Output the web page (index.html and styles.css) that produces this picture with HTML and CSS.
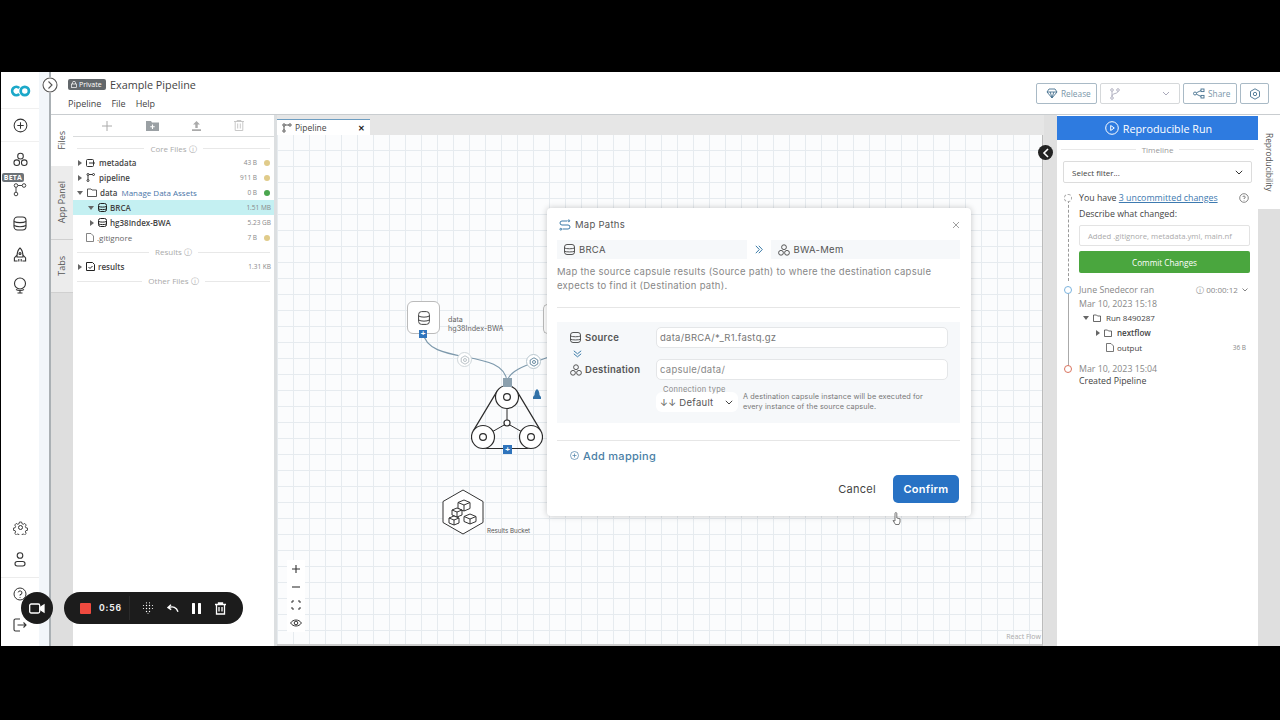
FILE: index.html
```html
<!DOCTYPE html>
<html lang="en">
<head>
<meta charset="utf-8">
<title>Example Pipeline</title>
<link rel="stylesheet" href="styles.css">
</head>
<body>
<div class="band"></div>
<div class="app">
  <nav class="rail">
    <div class="rail-logo">
      <svg width="21" height="12" viewBox="0 0 24 14" fill="none" stroke="#1ba8c9" stroke-width="3.200"><path d="M10.500 3.600A4.800 4.800 0 1 0 10.500 10.400"/><circle cx="17" cy="7" r="4.800"/></svg>
    </div>
    <div class="rail-item first">
      <svg width="15" height="15" viewBox="0 0 16 16" fill="none" stroke="#333" stroke-width="1.100"><circle cx="8" cy="8" r="6.800"/><path d="M8 4.600v6.800M4.600 8h6.800"/></svg>
    </div>
    <div class="rail-item sep">
      <svg width="15" height="15" viewBox="0 0 16 16" fill="none" stroke="#333" stroke-width="1.100"><circle cx="8" cy="4.400" r="3"/><circle cx="4" cy="11.400" r="3"/><circle cx="12" cy="11.400" r="3"/></svg>
    </div>
    <div class="rail-beta">
      <span class="beta">BETA</span>
      <svg width="14" height="14" viewBox="0 0 14 14" fill="none" stroke="#444" stroke-width="1"><circle cx="3" cy="2.500" r="1.800"/><circle cx="3" cy="11" r="1.800"/><circle cx="11" cy="2.500" r="1.800"/><path d="M3 4.300v4.900M5 2.500h4"/></svg>
    </div>
    <div class="rail-item db">
      <svg width="14" height="15" viewBox="0 0 14 15" fill="none" stroke="#333" stroke-width="1.100"><rect x="1" y="1" width="12" height="13" rx="3.500"/><path d="M1 5.400c3 1.600 9 1.600 12 0M1 9.600c3 1.600 9 1.600 12 0"/></svg>
    </div>
    <div class="rail-item rocket-item">
      <svg width="14" height="16" viewBox="0 0 14 16" fill="none" stroke="#333" stroke-width="1.100"><path d="M7 1C9.600 3 10 6 10 10H4C4 6 4.400 3 7 1ZM4 8l-2.600 3v3H4.600M10 8l2.600 3v3H9.400"/><circle cx="7" cy="6.500" r="1"/><path d="M5.800 12v2.500M8.200 12v2.500"/></svg>
    </div>
    <div class="rail-item compact">
      <svg width="14" height="17" viewBox="0 0 14 17" fill="none" stroke="#333" stroke-width="1.100"><circle cx="7" cy="6.500" r="5.500"/><path d="M3 12.500c2 1.300 6 1.300 8 0M7 13v3M4.500 16h5"/></svg>
    </div>
    <div class="rail-bottom">
      <div class="rail-item">
        <svg width="15" height="15" viewBox="0 0 24 24" fill="none" stroke="#333" stroke-width="1.600"><circle cx="12" cy="12" r="3.200"/><path d="M10 2h4l.6 3 2.400 1.100 2.600-1.600 2.800 2.900-1.600 2.500.9 2.600 3 .5v4l-3 .6-1 2.400 1.700 2.600-2.900 2.800-2.500-1.600-2.500 1-.6 3h-4l-.6-3-2.500-1-2.500 1.600-2.900-2.800 1.700-2.600-1-2.400-3-.6v-4l3-.5.900-2.600-1.600-2.500 2.800-2.900 2.600 1.600L9.400 5z" transform="translate(1.500 1.500) scale(.88)"/></svg>
      </div>
      <div class="rail-item user">
        <svg width="12" height="15" viewBox="0 0 12 15" fill="none" stroke="#333" stroke-width="1.100"><circle cx="6" cy="3.500" r="2.800"/><rect x="1" y="9.500" width="10" height="4.500" rx="2.200"/></svg>
      </div>
      <div class="rail-item help">
        <svg width="14" height="14" viewBox="0 0 14 14" fill="none" stroke="#333" stroke-width="1"><circle cx="7" cy="7" r="6"/><path d="M5.200 5.400A1.900 1.900 0 1 1 7 7.700V8.600M7 10v.8"/></svg>
      </div>
      <div class="rail-item">
        <svg width="14" height="14" viewBox="0 0 14 14" fill="none" stroke="#333" stroke-width="1.100"><path d="M7 1H2.500A1.500 1.500 0 0 0 1 2.500v9A1.500 1.500 0 0 0 2.500 13H7M4.500 7H13M10.500 4.500 13 7l-2.500 2.500"/></svg>
      </div>
    </div>
  </nav>
  <div class="gutter"></div>
  <div class="main">
    <header class="topbar">
      <div class="toggle">
        <svg width="16" height="16" viewBox="0 0 16 16" fill="none" stroke="#555" stroke-width="1.100"><circle cx="8" cy="8" r="7"/><path d="M6.500 4.500 10 8l-3.500 3.500"/></svg>
      </div>
      <div class="titles">
        <div class="title-row">
          <span class="private"><svg width="6" height="7" viewBox="0 0 6 7" fill="none" stroke="#fff" stroke-width=".7"><rect x=".5" y="3" width="5" height="3.500"/><path d="M1.500 3V1.800a1.500 1.500 0 0 1 3 0V3"/></svg>Private</span>
          <span class="pipeline-name">Example Pipeline</span>
        </div>
        <div class="menu"><span>Pipeline</span><span>File</span><span>Help</span></div>
      </div>
      <div class="actions">
        <button class="btn release">
          <svg width="12" height="11" viewBox="0 0 12 11" fill="none" stroke="#45708f" stroke-width=".9"><path d="M3 1h6l2 3-5 6-5-6zM1 4h10M4.200 4 6 10l1.800-6"/></svg>Release
        </button>
        <button class="btn branch">
          <svg width="10" height="12" viewBox="0 0 10 12" fill="none" stroke="#aab" stroke-width=".9"><circle cx="2" cy="2" r="1.300"/><circle cx="8" cy="2" r="1.300"/><circle cx="2" cy="10" r="1.300"/><path d="M2 3.300v5.400M8 3.300C8 6 2 5 2 8"/></svg>
          <svg class="chev" width="8" height="5" viewBox="0 0 8 5" fill="none" stroke="#aab" stroke-width="1"><path d="M1 1l3 3 3-3"/></svg>
        </button>
        <button class="btn share">
          <svg width="12" height="11" viewBox="0 0 12 11" fill="none" stroke="#45708f" stroke-width=".9"><circle cx="2" cy="5.500" r="1.500"/><rect x="8" y="1" width="3" height="2.600"/><rect x="8" y="7.400" width="3" height="2.600"/><path d="M3.400 4.800 8 2.500M3.400 6.200 8 8.500"/></svg>Share
        </button>
        <button class="btn gear">
          <svg width="12" height="12" viewBox="0 0 12 12" fill="none" stroke="#45708f" stroke-width=".9"><path d="M6 .8 10.500 3.400v5.200L6 11.200 1.500 8.600V3.400z"/><circle cx="6" cy="6" r="1.700"/></svg>
        </button>
      </div>
    </header>
    <div class="work">
      <div class="vtabs">
        <div class="vtab active"><span>Files</span></div>
        <div class="vtab panel"><span>App Panel</span></div>
        <div class="vtab tabs"><span>Tabs</span></div>
      </div>
      <aside class="files">
        <div class="file-tools">
          <svg width="12" height="12" viewBox="0 0 12 12" stroke="#aaa" fill="none" stroke-width="1"><path d="M6 1v10M1 6h10"/></svg>
          <svg width="13" height="11" viewBox="0 0 13 11"><path d="M0 1h5l1 1.500h7V11H0z" fill="#9aa0a4"/><path d="M6.500 4.500v4.500M4.300 6.700h4.400" stroke="#fff" stroke-width="1.100"/></svg>
          <svg width="9" height="10" viewBox="0 0 9 10" fill="#aaa"><path d="M4.500 0 8 3.500H5.700V7H3.300V3.500H1zM0 8.300h9V10H0z"/></svg>
          <svg width="10" height="11" viewBox="0 0 10 11" fill="none" stroke="#c2c2c2" stroke-width=".9"><path d="M0 1.500h10M3 1.500V.5h4v1M1.200 1.500V10.500h7.600V1.500M3.700 3.500v5M6.300 3.500v5"/></svg>
        </div>
        <div class="section-title core"><span>Core Files &#9432;</span></div>
        <div class="row"><i class="tri r"></i><svg class="ficon" width="10" height="8" viewBox="0 0 10 8" fill="none" stroke="#333"><rect x=".5" y=".5" width="7" height="7" rx="1"/><path d="M3 4h6"/></svg><b>metadata</b><em>43 B</em><u class="dot tan"></u></div>
        <div class="row"><i class="tri r"></i><svg class="ficon" width="10" height="9" viewBox="0 0 10 9" fill="none" stroke="#333"><circle cx="2" cy="1.500" r="1"/><circle cx="2" cy="7.500" r="1"/><circle cx="7.500" cy="1.500" r="1"/><path d="M2 2.500v4M3 1.500h3.500"/></svg><b>pipeline</b><em>911 B</em><u class="dot tan"></u></div>
        <div class="row"><i class="tri d"></i><svg class="ficon" width="10" height="9" viewBox="0 0 10 9" fill="none" stroke="#444" stroke-width=".9"><path d="M.5 1h3.500l1 1h4.500v6.500h-9z"/></svg><b>data</b><a>Manage Data Assets</a><em>0 B</em><u class="dot green"></u></div>
        <div class="row sel in1"><i class="tri d"></i><svg class="ficon" width="9" height="9" viewBox="0 0 9 9" fill="none" stroke="#222"><rect x=".5" y=".5" width="8" height="8" rx="2"/><path d="M.5 3.500c2 .8 6 .8 8 0M.5 6c2 .8 6 .8 8 0"/></svg><b>BRCA</b><em class="wide">1.51 MB</em></div>
        <div class="row in1 in1r"><i class="tri r"></i><svg class="ficon" width="9" height="9" viewBox="0 0 9 9" fill="none" stroke="#222"><rect x=".5" y=".5" width="8" height="8" rx="2"/><path d="M.5 3.500c2 .8 6 .8 8 0M.5 6c2 .8 6 .8 8 0"/></svg><b>hg38Index-BWA</b><em class="wide">5.23 GB</em></div>
        <div class="row"><i class="tri none"></i><svg class="ficon" width="8" height="9" viewBox="0 0 8 9" fill="none" stroke="#666" stroke-width=".8"><path d="M.5.500H5L7.500 3v5.500h-7z"/></svg><span class="plain">.gitignore</span><em>7 B</em><u class="dot tan"></u></div>
        <div class="section-title tight"><span>Results &#9432;</span></div>
        <div class="row"><i class="tri r"></i><svg class="ficon" width="9" height="9" viewBox="0 0 9 9" fill="none" stroke="#222"><path d="M.5.500h6l2 2v6h-8z"/><path d="M2.500 5l1.500 1.500L6.500 4"/></svg><b>results</b><em class="wide">1.31 KB</em></div>
        <div class="section-title tight"><span>Other Files &#9432;</span></div>
      </aside>
      <div class="split"></div>
      <section class="stage">
        <div class="stage-tabs">
          <div class="stage-tab">
            <svg width="10" height="10" viewBox="0 0 10 10" fill="none" stroke="#333" stroke-width=".8"><circle cx="2" cy="2" r="1.200"/><circle cx="2" cy="8" r="1.200"/><circle cx="8" cy="2" r="1.200"/><path d="M2 3.200v3.600M3.200 2h3.600"/></svg>
            <span>Pipeline</span><b>&#10005;</b>
          </div>
        </div>
        <div class="canvas">
          <div class="collapse">
            <svg width="8" height="10" viewBox="0 0 8 10" fill="none" stroke="#fff" stroke-width="1.600"><path d="M6 1 2 5l4 4"/></svg>
          </div>
          <svg class="wires" width="764" height="500" viewBox="0 0 764 500" fill="none" stroke="#7d99ac" stroke-width="1.200">
            <path d="M146 197C150 232 228 212 230 247"/>
            <path d="M230 247C232 235 250 230 272 222"/>
          </svg>
          <div class="node-data">
            <svg width="12" height="14" viewBox="0 0 12 14" fill="none" stroke="#444" stroke-width="1"><rect x=".6" y=".6" width="10.800" height="12.800" rx="3"/><path d="M.6 5c2.500 1.500 8.300 1.500 10.800 0M.6 9c2.500 1.500 8.300 1.500 10.800 0"/></svg>
            <span class="plus">+</span>
          </div>
          <div class="node-label"><span>data</span><span>hg38Index-BWA</span></div>
          <div class="node-stub"></div>
          <div class="mini m1"><svg width="10" height="10" viewBox="0 0 10 10" fill="none" stroke="#aab4ba" stroke-width=".8"><path d="M5 .8 8.800 3v4L5 9.200 1.200 7V3z"/><circle cx="5" cy="5" r="1.500"/></svg></div>
          <div class="mini m2"><svg width="10" height="10" viewBox="0 0 10 10" fill="none" stroke="#5b8098" stroke-width=".9"><path d="M5 .8 8.800 3v4L5 9.200 1.200 7V3z"/><circle cx="5" cy="5" r="1.500"/></svg></div>
          <span class="rocket"><svg width="8" height="10" viewBox="0 0 8 10" fill="#3272a8"><path d="M4 0c2 1.500 2.500 4 2.500 6L8 8v2H0V8l1.500-2C1.500 4 2 1.500 4 0z"/></svg></span>
          <div class="capsule">
            <svg width="72" height="72" viewBox="0 0 72 72" fill="#fff" stroke="#2b2b2b" stroke-width="1.200">
              <path d="M26.100 10.100 2.100 50.100M45.900 10.100 69.900 50.100M12 67.500h48"/>
              <path d="M36 21v20M34 43.500 12 56M38 43.500 60 56" stroke-width="1"/>
              <circle cx="36" cy="16" r="11.500"/><circle cx="36" cy="16" r="3.400"/>
              <circle cx="12" cy="56" r="11.500"/><circle cx="12" cy="56" r="3.400"/>
              <circle cx="60" cy="56" r="11.500"/><circle cx="60" cy="56" r="3.400"/>
              <circle cx="36" cy="42" r="3"/>
            </svg>
            <span class="handle-top"></span>
            <span class="plus">+</span>
          </div>
          <div class="bucket">
            <svg width="42" height="46" viewBox="0 0 42 46" fill="#fff" stroke="#333" stroke-width="1">
              <path d="M21 1 41 12.500V33.500L21 45 1 33.500V12.500z"/>
              <path d="M22 11l6 2.500v6l-6 2.500-6-2.500v-6zM16 13.500l6 2.500 6-2.500M22 16v6"/>
              <path d="M15 19l5 2v5l-5 2-5-2v-5zM10 21l5 2 5-2M15 23v5"/>
              <path d="M12 27l5 2v5l-5 2-5-2v-5zM7 29l5 2 5-2M12 31v5"/>
              <path d="M28 25l6 2.500v5l-6 2.500-6-2.500v-5zM22 27.500l6 2.500 6-2.500M28 30v5"/>
            </svg>
            <span>Results Bucket</span>
          </div>
          <div class="zoombar">
            <svg width="10" height="10" viewBox="0 0 10 10" stroke="#333" stroke-width="1.100"><path d="M5 1v8M1 5h8"/></svg>
            <svg width="10" height="10" viewBox="0 0 10 10" stroke="#333" stroke-width="1.100"><path d="M1 5h8"/></svg>
            <svg width="10" height="10" viewBox="0 0 10 10" fill="none" stroke="#333" stroke-width="1"><path d="M1 3V1h2M7 1h2v2M9 7v2H7M3 9H1V7"/></svg>
            <svg width="12" height="10" viewBox="0 0 12 10" fill="none" stroke="#333" stroke-width="1"><path d="M.6 5C3 1 9 1 11.400 5 9 9 3 9 .6 5z"/><circle cx="6" cy="5" r="1.800"/></svg>
          </div>
          <span class="flow-mark">React Flow</span>
          <div class="modal">
            <div class="modal-head">
              <svg width="12" height="12" viewBox="0 0 12 12" fill="none" stroke="#3b7ba8" stroke-width="1"><circle cx="9.800" cy="1.800" r=".9"/><circle cx="1.800" cy="10.200" r=".9"/><path d="M8 2H3a2 2 0 0 0 0 4h6a2 2 0 0 1 0 4H3.500"/></svg>
              <span>Map Paths</span>
              <svg class="close" width="8" height="8" viewBox="0 0 8 8" stroke="#888" stroke-width=".8"><path d="M1 1l6 6M7 1 1 7"/></svg>
            </div>
            <div class="modal-route">
              <div class="route-cell"><svg width="11" height="11" viewBox="0 0 11 11" fill="none" stroke="#444" stroke-width=".9"><rect x=".5" y=".5" width="10" height="10" rx="2.500"/><path d="M.5 4c2 1 8 1 10 0M.5 7.200c2 1 8 1 10 0"/></svg><span>BRCA</span></div>
              <svg class="route-arrow" width="8" height="9" viewBox="0 0 8 9" fill="none" stroke="#3b7ba8" stroke-width="1"><path d="M.8.800 4.300 4.500.8 8.200M3.800.800 7.300 4.500 3.800 8.200"/></svg>
              <div class="route-cell"><svg width="12" height="12" viewBox="0 0 12 12" fill="none" stroke="#444" stroke-width=".9"><circle cx="6" cy="3.200" r="2.400"/><circle cx="3" cy="8.800" r="2.400"/><circle cx="9" cy="8.800" r="2.400"/></svg><span>BWA-Mem</span></div>
            </div>
            <p class="modal-text">Map the source capsule results (Source path) to where the destination capsule expects to find it (Destination path).</p>
            <div class="mapping">
              <div class="map-row">
                <div class="map-label"><svg width="12" height="11" viewBox="0 0 12 11" fill="none" stroke="#444" stroke-width=".9"><rect x=".5" y=".5" width="10" height="10" rx="2.500"/><path d="M.5 4c2 1 8 1 10 0M.5 7.200c2 1 8 1 10 0"/></svg><span>Source</span></div>
                <div class="map-input">data/BRCA/*_R1.fastq.gz</div>
              </div>
              <svg class="map-arrow" width="9" height="8" viewBox="0 0 9 8" fill="none" stroke="#3b7ba8" stroke-width="1"><path d="M.800.800 4.500 3.800 8.200.800M.800 3.800 4.500 6.800 8.200 3.800"/></svg>
              <div class="map-row dest">
                <div class="map-label"><svg width="12" height="12" viewBox="0 0 12 12" fill="none" stroke="#444" stroke-width=".9"><circle cx="6" cy="3.200" r="2.400"/><circle cx="3" cy="8.800" r="2.400"/><circle cx="9" cy="8.800" r="2.400"/></svg><span>Destination</span></div>
                <div class="map-input muted">capsule/data/</div>
              </div>
              <div class="conn-row">
                <div class="conn-select">
                  <span class="conn-legend">Connection type</span>
                  <span class="conn-value">&#8595;&#8595; Default</span>
                  <svg width="8" height="5" viewBox="0 0 8 5" fill="none" stroke="#444" stroke-width="1"><path d="M.8.800 4 4 7.200.800"/></svg>
                </div>
                <p>A destination capsule instance will be executed for every instance of the source capsule.</p>
              </div>
            </div>
            <div class="add-map">
              <svg width="9" height="9" viewBox="0 0 9 9" fill="none" stroke="#4b7fa6" stroke-width=".7"><circle cx="4.500" cy="4.500" r="4"/><path d="M4.500 2.500v4M2.500 4.500h4"/></svg>
              <span>Add mapping</span>
            </div>
            <div class="modal-foot">
              <span class="cancel">Cancel</span>
              <span class="confirm">Confirm</span>
            </div>
          </div>
          <div class="cursor">
            <svg width="10" height="13" viewBox="0 0 10 13" fill="#fff" stroke="#555" stroke-width=".8"><path d="M3 1.500a.9.900 0 0 1 1.800 0V6l3.200.8V10L7 12.500H3.500L1 8.500 3 9z"/></svg>
          </div>
        </div>
      </section>
      <div class="split-r"></div>
      <aside class="runpanel">
        <div class="run-btn">
          <svg width="14" height="14" viewBox="0 0 14 14" fill="none" stroke="#fff" stroke-width="1"><circle cx="7" cy="7" r="6.300"/><path d="M5.700 4.500 9.300 7l-3.600 2.500z"/></svg>
          <span>Reproducible Run</span>
        </div>
        <div class="section-title run-title"><span>Timeline</span></div>
        <div class="filter"><span>Select filter...</span>
          <svg width="8" height="5" viewBox="0 0 8 5" fill="none" stroke="#333" stroke-width="1"><path d="M.8.800 4 4 7.200.800"/></svg>
        </div>
        <div class="timeline">
          <div class="t-item dashed">
            <span class="t-dot dash"></span>
            <div class="t-line"><span>You have <a>3 uncommitted changes</a></span>
              <svg width="10" height="10" viewBox="0 0 10 10" fill="none" stroke="#555" stroke-width=".7"><circle cx="5" cy="5" r="4.300"/><path d="M3.800 4a1.200 1.200 0 1 1 1.200 1.400V6M5 7v.5"/></svg>
            </div>
            <div class="t-text">Describe what changed:</div>
            <div class="commit-input">Added .gitignore, metadata.yml, main.nf</div>
            <div class="commit-btn">Commit Changes</div>
          </div>
          <div class="t-item solid">
            <span class="t-dot blue"></span>
            <div class="t-line"><span class="grey">June Snedecor ran</span><span class="timer">&#9432; 00:00:12 &nbsp;<svg width="6" height="4" viewBox="0 0 6 4" fill="none" stroke="#666" stroke-width=".8"><path d="M.5.500 3 3 5.500.500"/></svg></span></div>
            <div class="grey t-date">Mar 10, 2023 15:18</div>
            <div class="tree one"><i class="tri d"></i><svg width="9" height="8" viewBox="0 0 9 8" fill="none" stroke="#444" stroke-width=".8"><path d="M.5 1h3l1 1h3v5.500h-7z"/></svg><span>Run 8490287</span></div>
            <div class="tree two"><i class="tri r"></i><svg width="9" height="8" viewBox="0 0 9 8" fill="none" stroke="#444" stroke-width=".8"><path d="M.5 1h3l1 1h3v5.500h-7z"/></svg><b>nextflow</b></div>
            <div class="tree three"><svg width="8" height="9" viewBox="0 0 8 9" fill="none" stroke="#555" stroke-width=".8"><path d="M.5.500H5L7.500 3v5.500h-7z"/></svg><span>output</span><em>36 B</em></div>
          </div>
          <div class="t-item last">
            <span class="t-dot red"></span>
            <div class="grey t-date">Mar 10, 2023 15:04</div>
            <div class="t-text small">Created Pipeline</div>
          </div>
        </div>
      </aside>
      <div class="rtab"><span>Reproducibility</span></div>
    </div>
  </div>
  <div class="rec-cam">
    <svg width="16" height="11" viewBox="0 0 16 11" fill="none" stroke="#fff" stroke-width="1.300"><rect x=".7" y="1" width="10" height="9" rx="1.500"/><path d="M11 4.500 15 2v7l-4-2.500z" fill="#fff"/></svg>
  </div>
  <div class="rec-bar">
    <span class="rec-stop"></span>
    <span class="rec-time">0:56</span>
    <span class="rec-div"></span>
    <svg width="12" height="12" viewBox="0 0 12 12" fill="#fff"><circle cx="4.500" cy=".8" r=".6"/><circle cx="7.500" cy=".8" r=".6"/><circle cx="1.500" cy="3.500" r=".6"/><circle cx="4.500" cy="3.500" r=".7"/><circle cx="7.500" cy="3.500" r=".7"/><circle cx="10.500" cy="3.500" r=".6"/><circle cx="1.500" cy="6.500" r=".6"/><circle cx="4.500" cy="6.500" r=".7"/><circle cx="7.500" cy="6.500" r=".7"/><circle cx="10.500" cy="6.500" r=".6"/><circle cx="4.500" cy="9.500" r=".7"/><circle cx="7.500" cy="9.500" r=".7"/><circle cx="6" cy="11.300" r=".5"/></svg>
    <svg width="12" height="9" viewBox="0 0 12 9" fill="none" stroke="#fff" stroke-width="1.400"><path d="M4 .8 1 3.600l3.200 2M1.500 3.600C6 2 9.500 3 11 7.800"/></svg>
    <svg width="9" height="11" viewBox="0 0 9 11" fill="#fff"><rect width="3" height="11" rx=".6"/><rect x="6" width="3" height="11" rx=".6"/></svg>
    <svg class="rec-trash" width="11" height="13" viewBox="0 0 11 13" fill="none" stroke="#fff" stroke-width="1.300"><path d="M0 2.500h11M3.500 2.500V1h4v1.500M1.500 2.500V12h8V2.500M4 5v4.500M7 5v4.500"/></svg>
  </div>
</div>
<div class="band"></div>
</body>
</html>
```
FILE: styles.css
```css
* { box-sizing: border-box; }
html, body { margin: 0; padding: 0; }
body { width: 1280px; height: 720px; background: #000; overflow: hidden; font-family: "Open Sans", sans-serif; color: #333; display: flex; flex-direction: column; }
.band { height: 72px; flex: none; background: #000; }
.app { height: 574px; flex: none; display: flex; position: relative; padding-left: 1px; background: #fff; }
.app::before { content: ""; width: 1px; background: #000; margin-left: -1px; }

.rail { width: 38px; flex: none; display: flex; flex-direction: column; align-items: center; background: #fff; }
.rail-logo { height: 37px; width: 100%; display: flex; align-items: center; justify-content: center; }
.rail-item { width: 100%; display: flex; align-items: center; justify-content: center; height: 32px; flex: none; }
.rail-item.first { margin-top: -1px; border-top: 1px solid #f0f0f0; height: 34px; border-bottom: 1px solid #f0f0f0; }
.rail-item.sep { height: 34px; }
.rail-item.db { height: 30px; margin-top: 11px; }
.rail-item.rocket-item { height: 30px; margin-top: 2px; }
.rail-item.compact { height: 30px; }
.rail-beta { height: 24px; width: 100%; display: flex; flex-direction: column; align-items: center; position: relative; margin-top: -3px; }
.beta { background: #6d7378; color: #fff; font-size: 7px; font-weight: 700; line-height: 9px; padding: 0 2px; border-radius: 2px; letter-spacing: .2px; margin-right: 14px; }
.rail-beta svg { margin-top: 1px; }
.rail-bottom { margin-top: auto; padding-bottom: 5px; width: 100%; }
.rail-bottom .help { border-top: 1px solid #ececec; margin-top: 2px; }
.gutter { width: 12px; flex: none; background: #f2f6fa; border-right: 2px solid #aab0b4; }

.main { flex: 1; min-width: 0; display: flex; flex-direction: column; }
.topbar { height: 43px; flex: none; display: flex; align-items: flex-start; padding: 0 11px 0 0; border-bottom: 1px solid #c9cdd0; position: relative; background: #fff; }
.toggle { position: absolute; left: -9px; top: 5px; width: 16px; height: 16px; background: #fff; border-radius: 50%; display: flex; }
.titles { margin-left: 17px; display: flex; flex-direction: column; }
.title-row { display: flex; align-items: center; gap: 4px; height: 25px; }
.private { background: #62676b; color: #fff; font-size: 7px; border-radius: 2px; padding: 0 3px; line-height: 11px; height: 11px; width: 38px; display: flex; align-items: center; gap: 2px; }
.pipeline-name { font-size: 10.800px; color: #444; }
.menu { display: flex; gap: 10px; font-size: 9px; color: #444; line-height: 12px; margin-top: 1px; }
.actions { margin-left: auto; margin-top: 11px; display: flex; gap: 3px; }
.btn { height: 21px; border: 1px solid #a9bac6; background: #fff; border-radius: 2px; display: flex; align-items: center; gap: 3px; padding: 0 0 0 9px; font: 8.300px "Open Sans", sans-serif; color: #7a96a9; }
.btn.release { width: 61px; }
.btn.branch { width: 80px; border-color: #d5d8da; }
.btn .chev { margin-left: auto; margin-right: 9px; }
.btn.share { width: 54px; }
.btn.gear { width: 29px; justify-content: center; padding: 0; }

.work { flex: 1; min-height: 0; display: flex; background: #dfdfdf; position: relative; }
.vtabs { width: 22px; flex: none; display: flex; flex-direction: column; background: #dedede; }
.vtab { display: flex; align-items: center; justify-content: center; font-size: 9px; color: #555; background: #ececec; border-bottom: 1px solid #d0d0d0; padding-right: 2px; }
.vtab span { writing-mode: vertical-rl; transform: rotate(180deg); white-space: nowrap; }
.vtab.active { height: 51px; background: #fff; border-bottom: 0; }
.vtab.panel { height: 74px; }
.vtab.tabs { height: 53px; }
.files { width: 201px; flex: none; background: #fff; }
.file-tools { height: 22px; display: flex; align-items: center; padding: 0 30px 0 28px; justify-content: space-between; border-bottom: 1px solid #d9dbdc; }
.section-title { display: flex; align-items: center; justify-content: center; height: 24px; font-size: 8px; color: #aaa; }
.section-title::before { content: ""; flex: 1; height: 1px; background: #e8e8e8; margin: 0 6px 0 4px; }
.section-title::after { content: ""; flex: 1; height: 1px; background: #e8e8e8; margin: 0 4px 0 6px; }
.section-title.core { height: 18px; padding-top: 5px; }
.section-title.tight { height: 14px; }
.row { height: 15px; display: flex; align-items: center; font-size: 8px; padding: 0 3px 0 5px; color: #444; }
.row.in1 { padding-left: 16px; }
.row.in1r { padding-left: 17px; }
.row.sel { background: #c4f0f2; }
.row b { font-weight: 600; margin-left: 3px; }
.row a { color: #4a75a8; margin-left: 4px; }
.row em, .tree em { margin-left: auto; font-style: normal; font-size: 6.500px; color: #888; }
.row em { margin-right: 7px; }
.row em.wide { margin-right: 0; }
.row .plain { margin-left: 3px; color: #666; }
.ficon { margin-left: 4px; flex: none; }
.dot { width: 6px; height: 6px; border-radius: 50%; flex: none; margin-right: 1px; }
.dot.tan { background: #e0cb8a; }
.dot.green { background: #4aa64e; }
.tri { width: 0; height: 0; flex: none; display: block; }
.tri.r { border-left: 4px solid #666; border-top: 3px solid transparent; border-bottom: 3px solid transparent; }
.tri.d { border-top: 4px solid #666; border-left: 3px solid transparent; border-right: 3px solid transparent; margin-left: -1px; }
.tri.none { width: 4px; }
.split { width: 3px; flex: none; background: #dcdfe1; }
.stage { width: 767px; flex: none; display: flex; flex-direction: column; background: #e3e3e3; }
.stage-tabs { height: 20px; flex: none; display: flex; align-items: flex-end; background: #e6e6e6; }
.stage-tab { width: 93px; height: 16px; display: flex; align-items: center; gap: 3px; padding: 0 5px; background: #fff; border-top: 1px solid #6d9dc1; font-size: 8.500px; color: #444; }
.stage-tab b { margin-left: auto; font-size: 8px; color: #222; }
.canvas { flex: 1; position: relative; background-color: #fbfcfd; background-image: linear-gradient(#e6ebef 1px, transparent 1px), linear-gradient(90deg, #e6ebef 1px, transparent 1px); background-size: 16px 16px; background-position: 0 15px; margin-right: 1px; border-right: 1px solid #bbb; border-bottom: 2px solid #ccc; }
.collapse { position: absolute; right: -11px; top: 10px; z-index: 3; width: 15px; height: 15px; border-radius: 50%; background: #222; display: flex; align-items: center; justify-content: center; }
.wires { position: absolute; left: 0; top: 0; }
.node-data { position: absolute; left: 130px; top: 166px; width: 33px; height: 33px; background: #fff; border: 1px solid #bbb; border-radius: 6px; display: flex; align-items: center; justify-content: center; }
.plus { position: absolute; width: 8px; height: 8px; background: #2f74bc; color: #fff; font-size: 8px; line-height: 8px; text-align: center; font-weight: 700; font-family: "Liberation Sans", sans-serif; }
.node-data .plus { bottom: -5px; left: 11px; }
.node-label { position: absolute; left: 171px; top: 180px; display: flex; flex-direction: column; font-family: Inter, sans-serif; font-size: 7.200px; line-height: 9px; color: #666; }
.node-stub { position: absolute; left: 266px; top: 169px; width: 6px; height: 30px; background: #fff; border: 1px solid #bbb; border-right: 0; border-radius: 5px 0 0 5px; }
.mini { position: absolute; width: 15px; height: 15px; background: #fff; border: 1px solid #cfd6da; border-radius: 50%; display: flex; align-items: center; justify-content: center; }
.mini.m1 { left: 180px; top: 217px; }
.mini.m2 { left: 249px; top: 219px; border-color: #b8c6ce; }
.rocket { position: absolute; left: 256px; top: 254px; display: flex; }
.capsule { position: absolute; left: 194px; top: 246px; width: 72px; height: 72px; }
.capsule svg { display: block; }
.handle-top { position: absolute; left: 32px; top: -3px; width: 9px; height: 9px; background: #8ba0ae; }
.capsule .plus { left: 32px; top: 64px; width: 9px; height: 9px; line-height: 9px; }
.bucket { position: absolute; left: 165px; top: 354px; display: flex; align-items: flex-end; }
.bucket span { font-family: Inter, sans-serif; font-size: 6.200px; color: #555; margin-left: 3px; margin-bottom: 1px; white-space: nowrap; }
.zoombar { position: absolute; left: 10px; top: 425px; width: 18px; height: 72px; display: flex; flex-direction: column; align-items: center; justify-content: space-around; background: #fff; }
.flow-mark { position: absolute; right: 1px; bottom: 3px; font-size: 7px; color: #aaa; }
.modal { position: absolute; left: 270px; top: 73px; width: 424px; height: 308px; z-index: 2; background: #fff; border-radius: 4px; box-shadow: 0 0 6px rgba(0,0,0,.22); padding: 0 11px 0 10px; font-family: Inter, sans-serif; color: #555; letter-spacing: .27px; }
.modal-head { height: 33px; display: flex; align-items: center; gap: 4px; font-size: 9.500px; padding-left: 2px; }
.modal-head .close { margin-left: auto; }
.modal-route { display: flex; align-items: center; height: 19px; margin-top: -1px; }
.route-cell { flex: 1; height: 19px; display: flex; align-items: center; gap: 4px; background: #f6f8fa; padding-left: 7px; font-size: 9.500px; }
.route-arrow { margin: 0 8px; flex: none; }
.modal-text { margin: 6px 0 0; font-size: 9.500px; line-height: 14px; color: #888; height: 28px; }
.mapping { margin-top: 14px; border-top: 1px solid #e6e6e6; height: 116px; padding: 19px 12px 0 13px; background: linear-gradient(#fff 14px, #f6f8fa 14px); }
.map-row { display: flex; align-items: center; }
.map-label { width: 86px; flex: none; display: flex; align-items: center; gap: 3px; font-weight: 600; font-size: 9.500px; color: #555; }
.map-input { width: 292px; height: 21px; background: #fff; border: 1px solid #e4e6e8; border-radius: 5px; display: flex; align-items: center; padding-left: 3px; font-size: 9.500px; color: #777; }
.map-input.muted { color: #888; }
.map-arrow { display: block; margin: 2px 0 1px 3px; }
.conn-row { display: flex; align-items: center; gap: 5px; margin: 12px 0 0 86px; }
.conn-row p { margin: 0; width: 195px; font-size: 7.300px; line-height: 10px; color: #777; letter-spacing: .1px; }
.conn-select { width: 82px; height: 20px; flex: none; background: #fff; border-radius: 6px; display: flex; align-items: center; justify-content: space-between; padding: 0 5px 0 4px; position: relative; font-size: 9.500px; color: #555; }
.conn-legend { position: absolute; left: 7px; top: -7px; font-size: 7.500px; color: #888; white-space: nowrap; }
.add-map { margin-top: 17px; border-top: 1px solid #e6e6e6; height: 30px; padding-left: 13px; display: flex; align-items: center; gap: 4px; font-size: 11px; font-weight: 500; color: #4b7fa6; }
.modal-foot { display: flex; justify-content: flex-end; align-items: center; gap: 17px; margin-top: 5px; padding-right: 1px; }
.cancel { font-size: 11px; color: #444; }
.confirm { width: 66px; height: 28px; border-radius: 5px; background: #2872c4; color: #fff; font-size: 11px; font-weight: 600; display: flex; align-items: center; justify-content: center; }
.cursor { position: absolute; left: 615px; top: 377px; z-index: 3; display: flex; }

.split-r { width: 13px; flex: none; background: #e0e0e0; }
.runpanel { width: 201px; flex: none; background: #fff; display: flex; flex-direction: column; padding-top: 1px; }
.run-btn { height: 24px; flex: none; background: #2e7be0; color: #fff; display: flex; align-items: center; justify-content: center; gap: 4px; font-size: 10.800px; padding-left: 2px; }
.run-title { height: 21px; font-size: 8px; color: #999; padding-bottom: 2px; flex: none; }
.filter { margin: 0 6px; height: 22px; border: 1px solid #dcdcdc; border-radius: 2px; display: flex; align-items: center; justify-content: space-between; padding: 0 8px; font-size: 8px; color: #444; flex: none; }
.timeline { padding: 7px 8px 0 7px; }
.t-item { position: relative; padding-left: 15px; font-size: 8.800px; color: #444; }
.t-dot { position: absolute; left: 0; width: 8px; height: 8px; border-radius: 50%; top: 4px; background: #fff; z-index: 1; }
.t-dot.dash { border: 1px dashed #aaa; }
.t-dot.blue { border: 1px solid #7bb3de; }
.t-dot.red { border: 1px solid #d9745f; top: 2px; }
.t-item.dashed::before, .t-item.solid::before { content: ""; position: absolute; left: 4px; top: 10px; bottom: -8px; border-left: 1px dashed #999; }
.t-item.solid::before { border-left: 1px solid #aaa; }
.t-line { display: flex; justify-content: space-between; align-items: center; height: 16px; padding-right: 1px; }
.t-line a { color: #3d7ab0; text-decoration: underline; }
.t-text { line-height: 17px; }
.t-text.small { line-height: 12px; }
.commit-input { height: 21px; width: 171px; margin-top: 2px; border: 1px solid #e3e3e3; border-radius: 2px; display: flex; align-items: center; padding-left: 8px; font-size: 7.700px; color: #aaa; white-space: nowrap; }
.commit-btn { width: 171px; height: 22px; margin-top: 5px; background: #4aa63e; color: #fff; border-radius: 2px; display: flex; align-items: center; justify-content: center; font-size: 8.200px; }
.t-item.solid { margin-top: 9px; height: 81px; }
.grey { color: #888; }
.t-date { line-height: 12px; }
.timer { font-size: 8px; color: #888; display: flex; align-items: center; padding-right: 1px; white-space: pre; }
.tree { display: flex; align-items: center; gap: 4px; height: 15px; font-size: 8px; color: #444; }
.tree b { font-weight: 600; }
.tree.one { padding-left: 5px; }
.tree.two { padding-left: 17px; }
.tree.three { padding-left: 27px; gap: 3px; }
.tree em { margin-right: 4px; }
.rtab { width: 22px; flex: none; background: #fff; height: 94px; display: flex; align-items: center; justify-content: center; }
.rtab span { writing-mode: vertical-rl; font-size: 8.400px; color: #555; white-space: nowrap; }

.rec-cam { position: absolute; left: 21px; top: 520px; width: 32px; height: 32px; border-radius: 50%; background: #1c1c1c; display: flex; align-items: center; justify-content: center; z-index: 5; }
.rec-bar { position: absolute; left: 64px; top: 520px; width: 179px; height: 32px; border-radius: 16px; background: #1c1c1c; display: flex; align-items: center; padding: 0 16px; z-index: 5; gap: 13px; }
.rec-stop { width: 11px; height: 11px; background: #ef4a3f; border-radius: 1px; flex: none; margin-right: -5px; }
.rec-time { color: #eee; font-family: Inter, sans-serif; font-size: 8.500px; font-weight: 700; letter-spacing: .8px; }
.rec-div { width: 1px; height: 24px; background: #2a2a2a; margin: 0 -1px 0 -6px; }
.rec-trash { margin-left: 1px; }
```
